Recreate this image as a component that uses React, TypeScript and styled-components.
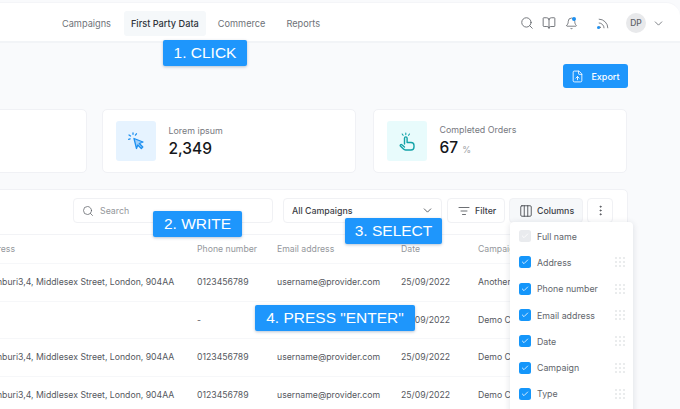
import React from "react";
import styled, { createGlobalStyle } from "styled-components";
import { Search, BookOpen, Bell, Rss, ChevronDown, FileUp, ListFilter, Columns3, MoreVertical, Check } from "lucide-react";

const Global = createGlobalStyle`
  html, body { margin: 0; padding: 0; background: #f9fafc; }
  body { font-family: Inter, "Liberation Sans", sans-serif; overflow: hidden; }
  #root { width: 680px; height: 409px; overflow: hidden; }
`;
const Page = styled.div`
  position: relative; width: 680px; height: 409px; overflow: hidden; background: #f9fafc;
`;
const Header = styled.header`
  box-sizing: border-box; height: 41px; margin-top: 2px; background: #fff; display: flex; align-items: center;
  border-top: 1px solid #f4f5f8; border-bottom: 2px solid #f2f4f7; border-top-right-radius: 14px;
  padding: 2px 15px 0 55px;
`;
const Nav = styled.nav`display: flex; align-items: center; flex: 1;`;
const NavItem = styled.a<{ $active?: boolean; $gap?: number }>`
  font-size: 9.2px; font-weight: ${p => (p.$active ? 500 : 400)};
  color: ${p => (p.$active ? "#30343b" : "#6e7278")};
  background: ${p => (p.$active ? "#f5f8fa" : "transparent")};
  padding: 0 7px; height: 25px; line-height: 25px; border-radius: 3px; margin-right: ${p => p.$gap ?? 0}px;
`;
const Tools = styled.div`display: flex; align-items: center; color: #62666c;`;
const ToolIcon = styled.span<{ $w: number; $ml?: number }>`
  position: relative; display: flex; justify-content: center; width: ${p => p.$w}px; margin-left: ${p => p.$ml ?? 0}px;
`;
const Dot = styled.i<{ $t: number; $l: number; $s?: number }>`
  position: absolute; top: ${p => p.$t}px; left: ${p => p.$l}px; width: ${p => p.$s ?? 4}px; height: ${p => p.$s ?? 4}px;
  border-radius: 50%; background: #1e90f0;
`;
const Avatar = styled.div`
  width: 20px; height: 20px; border-radius: 50%; background: #e8e9eb; color: #5f6368; font-size: 8.5px;
  font-weight: 500; display: flex; align-items: center; justify-content: center; margin: 0 6px 0 12px;
`;
const Main = styled.main`
  margin-left: -167px; width: 795px; padding-top: 21px;
  display: flex; flex-direction: column;
`;
const TopRow = styled.div`display: flex; justify-content: flex-end; margin-bottom: 21px;`;
const ExportBtn = styled.button`
  width: 65px; height: 24px; border: 0; border-radius: 3px; background: #1e96fc; color: #fff;
  font: 500 9px Inter, sans-serif; display: flex; align-items: center; justify-content: center; gap: 7px; padding: 0;
`;
const Cards = styled.div`display: flex; gap: 15px; margin-bottom: 16px;`;
const Card = styled.section`
  width: 254px; height: 64px; box-sizing: border-box; background: #fff; border: 1px solid #f0f1f5; border-radius: 5px;
  display: flex; align-items: center; gap: 12.5px; padding-left: 13px;
  &:nth-child(3) { margin-left: 2px; }
`;
const IconBox = styled.div<{ $teal?: boolean }>`
  width: 40px; height: 40px; border-radius: 3px; display: flex; align-items: center; justify-content: center;
  background-color: ${p => (p.$teal ? "#e8fbfc" : "#e6f3ff")}; color: ${p => (p.$teal ? "#12a3a8" : "#1e90f0")};
  background-image: ${p => (p.$teal ? "radial-gradient(#d3f3f5 0.5px, transparent 0.6px)" : "none")};
  background-size: 4px 4px;
`;
const CardText = styled.div`padding-top: 2px;`;
const CardLabel = styled.div`font-size: 8.9px; color: #77797f; line-height: 12px;`;
const CardValue = styled.div`font-size: 15.5px; font-weight: 500; color: #15171a; line-height: 21px; margin-top: 1px;`;
const Unit = styled.span`font-size: 9px; font-weight: 400; color: #9ea1a6; margin-left: 4px;`;
const Panel = styled.section`
  background: #fff; border: 1px solid #f0f1f5; border-radius: 5px; height: 260px; box-sizing: border-box;
`;
const Toolbar = styled.div`
  height: 45px; box-sizing: border-box; padding: 8px 14px 0 0; display: flex; justify-content: flex-end;
  border-bottom: 1px solid #f2f3f6;
`;
const Field = styled.div<{ $w: number; $mr: number }>`
  width: ${p => p.$w}px; margin-right: ${p => p.$mr}px; height: 25px; box-sizing: border-box; border: 1px solid #f0f1f4;
  border-radius: 4px; display: flex; align-items: center; font-size: 8.8px; color: #3c4046; padding: 0 7px 0 8px; gap: 6px; flex: none;
`;
const Placeholder = styled.span`color: #94979c;`;
const Grow = styled.span`flex: 1; font-weight: 500;`;
const FilterField = styled(Field)`padding-left: 10px; gap: 5px;`;
const ColumnsWrap = styled.div`position: relative; margin-right: 4px; flex: none;`;
const ColumnsBtn = styled(Field)`background: #f6f8fa; font-weight: 500; margin: 0; gap: 4px; padding-left: 9px;`;
const MoreBtn = styled(Field)`justify-content: center; padding: 0; color: #4a4e54;`;
const Menu = styled.div`
  position: absolute; top: 24px; left: 1px; width: 123px; height: 200px; z-index: 2; background: #fff; border-radius: 4px;
  box-shadow: 0 1px 6px rgba(40, 50, 70, 0.14); padding-top: 1px;
`;
const MenuRow = styled.div`
  height: 26.3px; display: flex; align-items: center; padding: 0 8px 0 9px; font-size: 8.8px; color: #62666c;
`;
const Box = styled.span<{ $off?: boolean }>`
  width: 12px; height: 12px; border-radius: 2.5px; display: flex; align-items: center; justify-content: center;
  background: ${p => (p.$off ? "#e9ebee" : "#1596fa")}; color: #fff; margin-right: 6px;
`;
const MenuLabel = styled.span`flex: 1;`;
const Row = styled.div<{ $head?: boolean }>`
  display: grid; grid-template-columns: 216px 80px 124px 77px 1fr; align-items: center; padding-left: 147px;
  height: ${p => (p.$head ? "29px" : "37.6px")}; box-sizing: border-box; border-bottom: 1px solid #f6f7f9;
  font-size: 8.7px; color: ${p => (p.$head ? "#94979c" : "#55585e")};
  white-space: nowrap;
`;
const Callout = styled.div<{ $x: number; $y: number; $w: number }>`
  position: absolute; left: ${p => p.$x}px; top: ${p => p.$y}px; width: ${p => p.$w}px; height: 26px; z-index: 5;
  background: #1e96fc; color: #fff; border-radius: 2px; box-shadow: 0 1px 3px rgba(20, 60, 110, 0.3);
  font: 15.5px/26px "Liberation Sans", Arial, sans-serif; text-align: center;
`;

const Grip = () => (
  <svg width="10" height="10" viewBox="0 0 10 10" fill="#c6c9ce">
    {[1, 5, 9].flatMap(y => [1, 5, 9].map(x => <rect key={`${x}${y}`} x={x - 0.6} y={y - 0.6} width="1.2" height="1.2" />))}
  </svg>
);

const CursorIcon = () => (
  <svg width="17" height="18" viewBox="0 0 17 18" fill="none" stroke="currentColor" strokeWidth="1.3" strokeLinecap="round" strokeLinejoin="round">
    <path d="M6 6.5l9 3.5-3.7 1.5 3.5 3.5-1.5 1.5-3.5-3.5-1.3 3.5z" fill="currentColor" fillOpacity="0.35" />
    <path d="M1 3l1.5 1M5 .8v1.5M.6 7.3l1.5-.5M8.4 1.8l-1 1.3" />
  </svg>
);

const HandIcon = () => (
  <svg width="18" height="19" viewBox="0 0 18 19" fill="none" stroke="currentColor" strokeWidth="1.4" strokeLinecap="round" strokeLinejoin="round">
    <path d="M6.5 12V6.2a1.3 1.3 0 0 1 2.6 0v4.3h3.9a3 3 0 0 1 3 3v1.5a3 3 0 0 1-3 3H7.6c-1 0-1.7-.4-2.4-1.2L2.4 14c-.7-1 .6-2 1.5-1.2L6.5 15" />
    <path d="M7.8 1v1.6M4.2 2l.9 1.3M11.5 2l-.9 1.3" strokeWidth="1.1" />
  </svg>
);

const addr = "Thonburi3,4, Middlesex Street, London, 904AA";
const rows = [
  [addr, "0123456789", "username@provider.com", "25/09/2022", "Another Campaign"],
  ["", "-", "-", "25/09/2022", "Demo Campaign"],
  [addr, "0123456789", "username@provider.com", "25/09/2022", "Demo Campaign"],
  [addr, "0123456789", "username@provider.com", "25/09/2022", "Demo Campaign"],
];
const cols = ["Full name", "Address", "Phone number", "Email address", "Date", "Campaign", "Type"];

export default function App() {
  return (
    <Page>
      <Global />
      <Header>
        <Nav>
          <NavItem $gap={6}>Campaigns</NavItem>
          <NavItem $active $gap={5}>First Party Data</NavItem>
          <NavItem $gap={7}>Commerce</NavItem>
          <NavItem>Reports</NavItem>
        </Nav>
        <Tools>
          <ToolIcon $w={23}><Search size={14} strokeWidth={1.5} /></ToolIcon>
          <ToolIcon $w={22}><BookOpen size={14} strokeWidth={1.5} /></ToolIcon>
          <ToolIcon $w={22}><Bell size={13} strokeWidth={1.5} /><Dot $t={0} $l={12} /></ToolIcon>
          <ToolIcon $w={22} $ml={10}><Rss size={13} strokeWidth={1.5} /><Dot $t={9} $l={5} $s={3} /></ToolIcon>
          <Avatar>DP</Avatar>
          <ChevronDown size={13} strokeWidth={1.5} />
        </Tools>
      </Header>
      <Main>
        <TopRow>
          <ExportBtn><FileUp size={13} strokeWidth={1.6} />Export</ExportBtn>
        </TopRow>
        <Cards>
          <Card />
          <Card>
            <IconBox><CursorIcon /></IconBox>
            <CardText>
              <CardLabel>Lorem ipsum</CardLabel>
              <CardValue>2,349</CardValue>
            </CardText>
          </Card>
          <Card>
            <IconBox $teal><HandIcon /></IconBox>
            <CardText>
              <CardLabel>Completed Orders</CardLabel>
              <CardValue>67<Unit>%</Unit></CardValue>
            </CardText>
          </Card>
        </Cards>
        <Panel>
          <Toolbar>
            <Field $w={200} $mr={10}><Search size={12} strokeWidth={1.5} color="#5f6368" /><Placeholder>Search</Placeholder></Field>
            <Field $w={159} $mr={5}><Grow>All Campaigns</Grow><ChevronDown size={13} strokeWidth={1.5} /></Field>
            <FilterField $w={58} $mr={4}><ListFilter size={12} strokeWidth={1.5} /><Grow>Filter</Grow></FilterField>
            <ColumnsWrap>
              <ColumnsBtn $w={74} $mr={0}><Columns3 size={14} strokeWidth={1.4} />Columns</ColumnsBtn>
              <Menu>
                {cols.map((c, i) => (
                  <MenuRow key={c}>
                    <Box $off={i === 0}><Check size={8} strokeWidth={2.4} /></Box>
                    <MenuLabel>{c}</MenuLabel>
                    {i > 0 && <Grip />}
                  </MenuRow>
                ))}
              </Menu>
            </ColumnsWrap>
            <MoreBtn $w={26} $mr={0}><MoreVertical size={13} strokeWidth={1.6} /></MoreBtn>
          </Toolbar>
          <Row $head>
            <span>Address</span><span>Phone number</span><span>Email address</span><span>Date</span><span>Campaign</span>
          </Row>
          {rows.map((r, i) => (
            <Row key={i}>{r.map((c, j) => <span key={j}>{c}</span>)}</Row>
          ))}
        </Panel>
      </Main>
      <Callout $x={163} $y={40} $w={84}>1. CLICK</Callout>
      <Callout $x={153} $y={211} $w={89}>2. WRITE</Callout>
      <Callout $x={345} $y={218} $w={97}>3. SELECT</Callout>
      <Callout $x={255} $y={305} $w={160}>4. PRESS "ENTER"</Callout>
    </Page>
  );
}
